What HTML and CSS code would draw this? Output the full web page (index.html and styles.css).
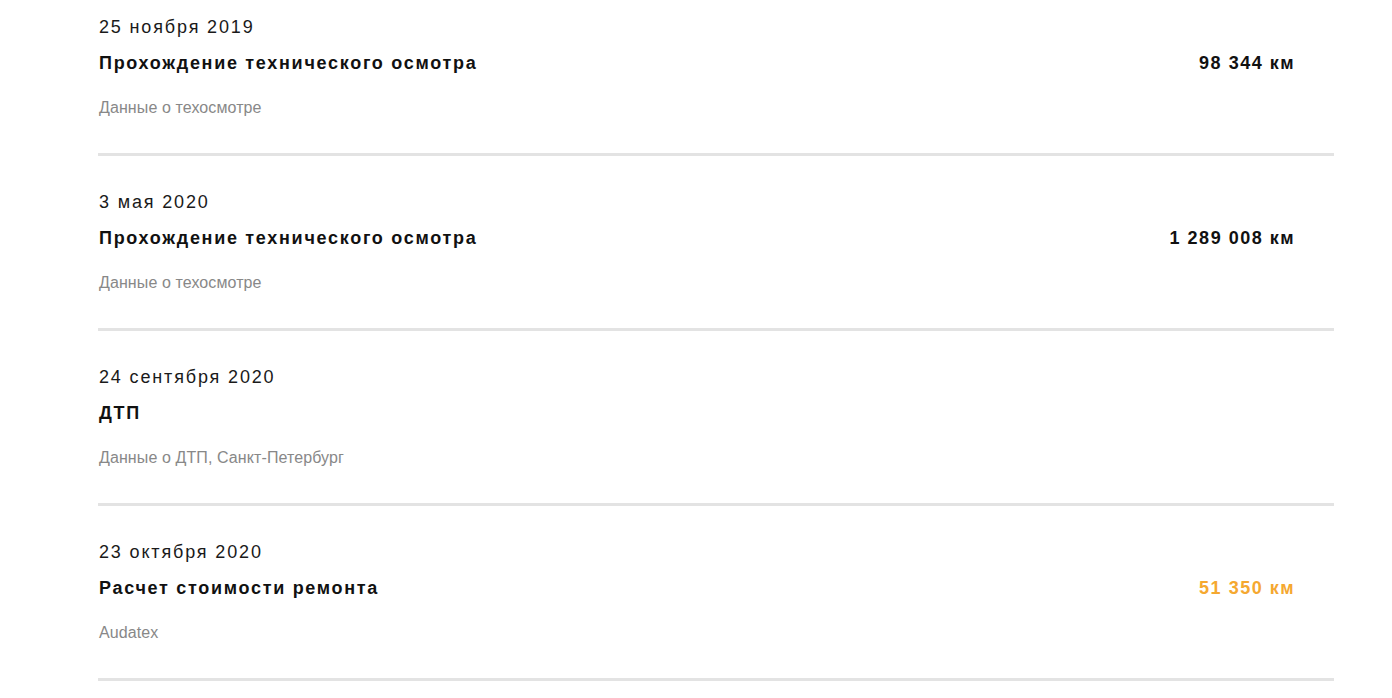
FILE: index.html
```html
<!DOCTYPE html>
<html lang="ru">
<head>
<meta charset="utf-8">
<link rel="stylesheet" href="styles.css">
</head>
<body>
<div class="list">
  <div class="item">
    <div class="date">25 ноября 2019</div>
    <div class="row">
      <div class="title">Прохождение технического осмотра</div>
      <div class="value">98 344 км</div>
    </div>
    <div class="sub">Данные о техосмотре</div>
  </div>
  <div class="item">
    <div class="date">3 мая 2020</div>
    <div class="row">
      <div class="title">Прохождение технического осмотра</div>
      <div class="value">1 289 008 км</div>
    </div>
    <div class="sub">Данные о техосмотре</div>
  </div>
  <div class="item">
    <div class="date">24 сентября 2020</div>
    <div class="row">
      <div class="title">ДТП</div>
    </div>
    <div class="sub">Данные о ДТП, Санкт-Петербург</div>
  </div>
  <div class="item">
    <div class="date">23 октября 2020</div>
    <div class="row">
      <div class="title">Расчет стоимости ремонта</div>
      <div class="value warn">51 350 км</div>
    </div>
    <div class="sub">Audatex</div>
  </div>
</div>
</body>
</html>
```
FILE: styles.css
```css
html, body {
  margin: 0;
  background: #fff;
}
body {
  font-family: "Liberation Sans", Arial, sans-serif;
  color: #111;
}
.list {
  width: 1236px;
  margin-left: 98px;
  padding-top: 15px;
  display: flex;
  flex-direction: column;
  gap: 34px;
}
.item {
  padding: 0 40px 35px 1px;
  border-bottom: 3px solid #e3e3e3;
}
.date {
  font-size: 18px;
  line-height: 24px;
  letter-spacing: 1.85px;
  color: #1a1a1a;
}
.row {
  display: flex;
  justify-content: space-between;
  align-items: center;
  margin-top: 12px;
  height: 24px;
}
.title {
  font-size: 18px;
  font-weight: bold;
  letter-spacing: 1.7px;
  line-height: 24px;
  color: #111;
}
.value {
  font-size: 18px;
  font-weight: bold;
  letter-spacing: 1.5px;
  line-height: 24px;
  color: #111;
  margin-right: -1px;
}
.value.warn {
  color: #f5a830;
}
.sub {
  margin-top: 23px;
  font-size: 16px;
  line-height: 20px;
  color: #888;
  letter-spacing: 0.1px;
}
```
